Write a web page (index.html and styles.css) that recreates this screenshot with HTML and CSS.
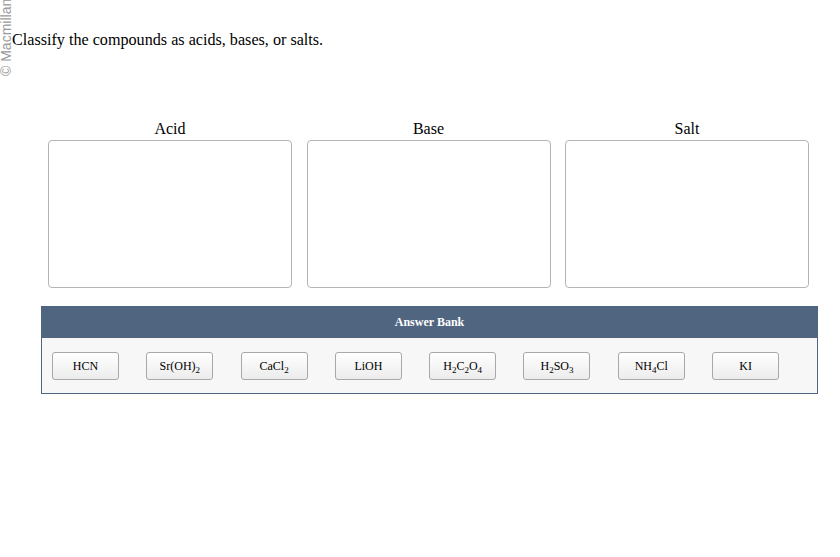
FILE: index.html
```html
<!DOCTYPE html>
<html>
<head>
<meta charset="utf-8">
<link rel="stylesheet" href="styles.css">
</head>
<body>
<div class="watermark">© Macmillan</div>
<p class="question">Classify the compounds as acids, bases, or salts.</p>
<div class="bins">
  <div class="bin"><div class="bin-label">Acid</div><div class="bin-box"></div></div>
  <div class="bin"><div class="bin-label">Base</div><div class="bin-box"></div></div>
  <div class="bin"><div class="bin-label">Salt</div><div class="bin-box"></div></div>
</div>
<div class="bank">
  <div class="bank-head">Answer Bank</div>
  <div class="bank-body">
    <div class="chip">HCN</div>
    <div class="chip">Sr(OH)<sub>2</sub></div>
    <div class="chip">CaCl<sub>2</sub></div>
    <div class="chip">LiOH</div>
    <div class="chip">H<sub>2</sub>C<sub>2</sub>O<sub>4</sub></div>
    <div class="chip">H<sub>2</sub>SO<sub>3</sub></div>
    <div class="chip">NH<sub>4</sub>Cl</div>
    <div class="chip">KI</div>
  </div>
</div>
</body>
</html>
```
FILE: styles.css
```css
html, body {
  margin: 0;
  padding: 0;
  background: #ffffff;
}
body {
  font-family: "Liberation Serif", "Times New Roman", serif;
  color: #000;
  position: relative;
  width: 840px;
  height: 557px;
  overflow: hidden;
}
.watermark {
  position: absolute;
  left: 0;
  top: 76px;
  transform-origin: 0 0;
  transform: rotate(-90deg);
  font-family: "Liberation Sans", Arial, sans-serif;
  font-size: 14px;
  line-height: 13px;
  color: #9a9a9a;
  white-space: nowrap;
}
.question {
  margin: 31px 0 0 12px;
  font-size: 16.15px;
  line-height: 18px;
}
.bins {
  display: grid;
  grid-template-columns: 244px 244px 244px;
  column-gap: 14.5px;
  margin: 70px 0 0 48px;
}
.bin-label {
  text-align: center;
  font-size: 16px;
  line-height: 18px;
  margin-bottom: 2px;
  padding-top: 1px;
}
.bin-box {
  height: 146px;
  border: 1px solid #b4b4b4;
  border-radius: 4px;
  background: #fff;
}
.bank {
  margin: 18px 0 0 41px;
  width: 775px;
  border: 1px solid #4f6580;
  border-top: none;
}
.bank-head {
  background: #4f6580;
  color: #fff;
  font-weight: bold;
  font-size: 12px;
  height: 32px;
  line-height: 32px;
  text-align: center;
}
.bank-body {
  background: #f7f7f7;
  display: flex;
  column-gap: 27.3px;
  padding: 14px 10px 13px 10px;
}
.chip {
  width: 65px;
  height: 26px;
  border: 1px solid #a8a8a8;
  border-radius: 3px;
  background: linear-gradient(#ffffff, #ececec);
  font-size: 12px;
  line-height: 26px;
  text-align: center;
  box-sizing: content-box;
}
.chip sub {
  font-size: 9px;
  line-height: 0;
  vertical-align: -3px;
}
```
